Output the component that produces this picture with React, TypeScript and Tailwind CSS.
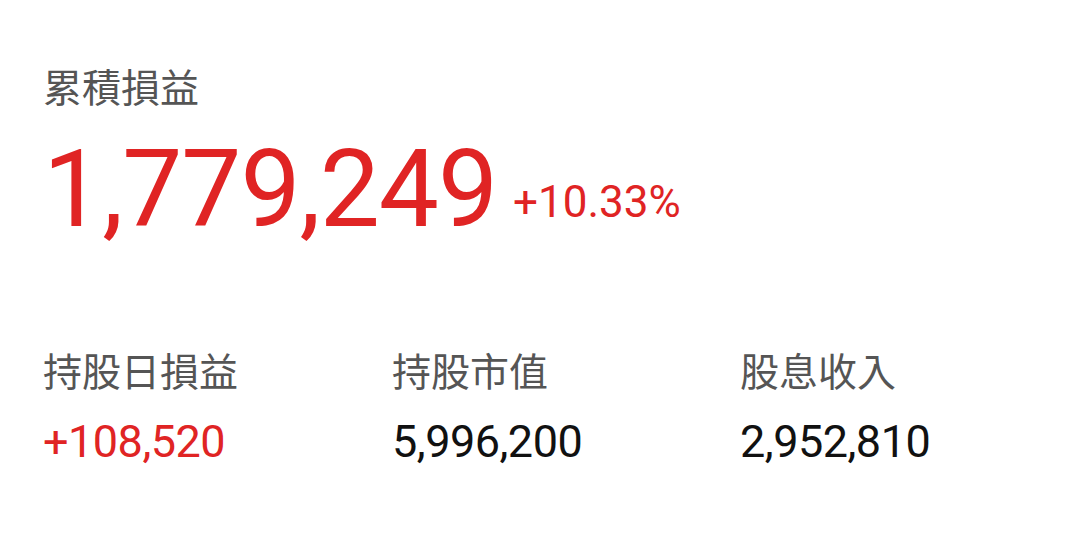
export default function App() {
  const stats = [
    { label: '持股日損益', value: '+108,520', up: true },
    { label: '持股市值', value: '5,996,200', up: false },
    { label: '股息收入', value: '2,952,810', up: false },
  ]

  return (
    <main
      className="w-[1080px] h-[533px] bg-white pl-[43px] pt-[65px]"
      style={{ fontFamily: 'Roboto, "Noto Sans CJK TC", sans-serif' }}
    >
      {/* Cumulative P/L */}
      <div className="text-[39px] leading-[48px] text-[#555555]">累積損益</div>
      <div className="flex items-end mt-[22px]">
        <span className="text-[107px] leading-[110px] text-[#e02424] tracking-[-1px]">1,779,249</span>
        <span className="text-[44px] leading-[48px] text-[#e02424] ml-[16px] mb-[19px]">+10.33%</span>
      </div>

      {/* Summary row */}
      <div className="grid grid-cols-[349px_348px_300px] mt-[104px]">
        {stats.map((s) => (
          <div key={s.label}>
            <div className="text-[39px] leading-[48px] text-[#555555]">{s.label}</div>
            <div
              className={`text-[45px] leading-[52px] mt-[19px] tracking-[-0.5px] ${s.up ? 'text-[#e02424]' : 'text-[#111111]'}`}
            >
              {s.value}
            </div>
          </div>
        ))}
      </div>
    </main>
  )
}
